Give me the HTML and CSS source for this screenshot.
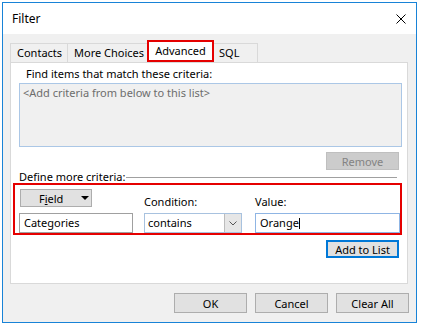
FILE: index.html
```html
<!DOCTYPE html>
<html lang="en">
<head>
  <meta charset="utf-8" />
  <title>Filter</title>
  <link rel="stylesheet" href="styles.css">
</head>
<body>
  <div class="window">
    <div class="titlebar">
      <span class="title">Filter</span>
      <svg class="close" width="10" height="10" viewBox="0 0 10 10">
        <path d="M0.5 0.5 L9.5 9.5 M9.5 0.5 L0.5 9.5" stroke="#000" stroke-width="1" fill="none" />
      </svg>
    </div>

    <div class="client">
      <div class="tabs">
        <div class="tab tab-contacts">Contacts</div>
        <div class="tab tab-more">More Choices</div>
        <div class="tab tab-active">Advanced</div>
        <div class="tab tab-sql">SQL</div>
      </div>

      <section class="panel">
        <p class="caption">Find items that match these criteria:</p>
        <div class="criteria-list">&lt;Add criteria from below to this list&gt;</div>
        <div class="actions">
          <button class="btn btn-disabled">Remove</button>
        </div>

        <div class="group-title"><span>Define more criteria:</span><i class="rule"></i></div>

        <div class="define">
          <button class="field-btn"><span>F<u>i</u>eld</span><i class="caret-down"></i></button>
          <label class="lbl">Condition:</label>
          <label class="lbl">Value:</label>

          <div class="textbox tb-field">Categories</div>
          <div class="combo">
            <span class="combo-text">contains</span>
            <span class="combo-btn">
              <svg width="8" height="5" viewBox="0 0 8 5"><path d="M0.5 0.5 L4 4 L7.5 0.5" stroke="#555" fill="none" /></svg>
            </span>
          </div>
          <div class="textbox tb-value">Orange<i class="text-caret"></i></div>
        </div>

        <div class="actions actions-add">
          <button class="btn btn-default">Add to List</button>
        </div>
      </section>

      <div class="footer">
        <button class="btn btn-big">OK</button>
        <button class="btn btn-big">Cancel</button>
        <button class="btn btn-big">Clear All</button>
      </div>
    </div>
  </div>
</body>
</html>
```

FILE: styles.css
```css
:root {
  --face: #f0f0f0;
  --btn: #e1e1e1;
  --btn-border: #adadad;
  --tab-border: #d9d9d9;
  --accent: #1883d7;
  --mark: #e50000;
}

* { box-sizing: border-box; margin: 0; padding: 0; }

body {
  font-family: "Noto Sans", "Open Sans", sans-serif;
  font-size: 11px;
  color: #000;
  background: #fff;
  padding: 2px;
}

button {
  font: inherit;
  color: inherit;
}

.window {
  width: 415px;
  height: 321px;
  border: 1px solid var(--accent);
  background: var(--face);
  display: flex;
  flex-direction: column;
}

.titlebar {
  height: 31px;
  background: #fff;
  display: flex;
  align-items: center;
  justify-content: space-between;
  padding: 0 10px 0 9px;
}

.title {
  font-size: 12px;
  line-height: 15px;
}

.close {
  display: block;
}

.client {
  padding: 6px 7px 0 7px;
}

/* tab strip */
.tabs {
  display: flex;
  align-items: flex-end;
  height: 22px;
}

.tab {
  height: 19px;
  line-height: 18px;
  border: 1px solid var(--tab-border);
  border-bottom: none;
  padding-left: 6px;
  background: var(--face);
  white-space: nowrap;
}

.tab-contacts { width: 58px; }
.tab-more { width: 81px; margin-left: -1px; }
.tab-sql { width: 45px; margin-left: -1px; padding-left: 5px; }

.tab-active {
  position: relative;
  width: 67px;
  height: 22px;
  margin-left: -1px;
  padding: 0;
  text-align: center;
  line-height: 17px;
  background: #fff;
  border: 2px solid var(--mark);
  z-index: 1;
}

/* page */
.panel {
  width: 398px;
  height: 222px;
  background: #fff;
  border: 1px solid var(--tab-border);
}

.caption {
  margin: 3px 0 0 15px;
  line-height: 15px;
}

.criteria-list {
  margin: 2px 0 0 8px;
  width: 383px;
  height: 64px;
  border: 1px solid #abc7e6;
  background: var(--face);
  color: #6d6d6d;
  padding: 1px 3px;
  line-height: 15px;
}

.actions {
  display: flex;
  justify-content: flex-end;
  padding-right: 8px;
  margin-top: 5px;
}

.btn {
  width: 73px;
  height: 18px;
  line-height: 15px;
  background: var(--btn);
  border: 1px solid var(--btn-border);
}

.btn-disabled {
  background: #cccccc;
  border-color: #bfbfbf;
  color: #838383;
}

.btn-default {
  border: 2px solid #0078d7;
}

.btn-big {
  height: 20px;
}

.group-title {
  display: flex;
  align-items: center;
  height: 12px;
  line-height: 12px;
  margin: 1px 10px 0 8px;
}

.rule {
  flex: 1;
  height: 0;
  border-top: 1px solid #a0a0a0;
  margin-left: 1px;
}

/* criteria builder */
.define {
  margin-left: 2px;
  width: 389px;
  height: 52px;
  border: 2px solid var(--mark);
  padding-left: 4px;
  display: grid;
  grid-template-columns: 125px 111px 145px;
  grid-template-rows: 28px 20px;
}

.field-btn {
  width: 72px;
  height: 18px;
  margin: 4px 0 0 1px;
  background: var(--btn);
  border: 1px solid var(--btn-border);
  display: flex;
  align-items: center;
  padding-left: 18px;
  line-height: 15px;
}

.field-btn u {
  text-underline-offset: 1px;
}

.caret-down {
  width: 0;
  height: 0;
  border-left: 4px solid transparent;
  border-right: 4px solid transparent;
  border-top: 4px solid #000;
  margin-left: 18px;
}

.lbl {
  align-self: end;
  line-height: 15px;
  margin-bottom: 4px;
}

.textbox {
  height: 20px;
  line-height: 18px;
  padding-left: 4px;
  border: 1px solid #a0a0a0;
  background: #fff;
  display: flex;
  align-items: center;
}

.tb-field { width: 114px; }

.tb-value {
  width: 145px;
  border-color: #8fb5e4;
}

.text-caret {
  width: 1px;
  height: 11px;
  background: #000;
}

.combo {
  width: 98px;
  height: 20px;
  border: 1px solid #a8c2df;
  background: #fff;
  display: flex;
  align-items: stretch;
}

.combo-text {
  flex: 1;
  padding-left: 3px;
  line-height: 18px;
}

.combo-btn {
  width: 17px;
  background: #e6e6e6;
  border-left: 1px solid #bcbcbc;
  display: flex;
  align-items: center;
  justify-content: center;
}

.footer {
  display: flex;
  justify-content: flex-end;
  gap: 8px;
  margin-top: 9px;
}
```
